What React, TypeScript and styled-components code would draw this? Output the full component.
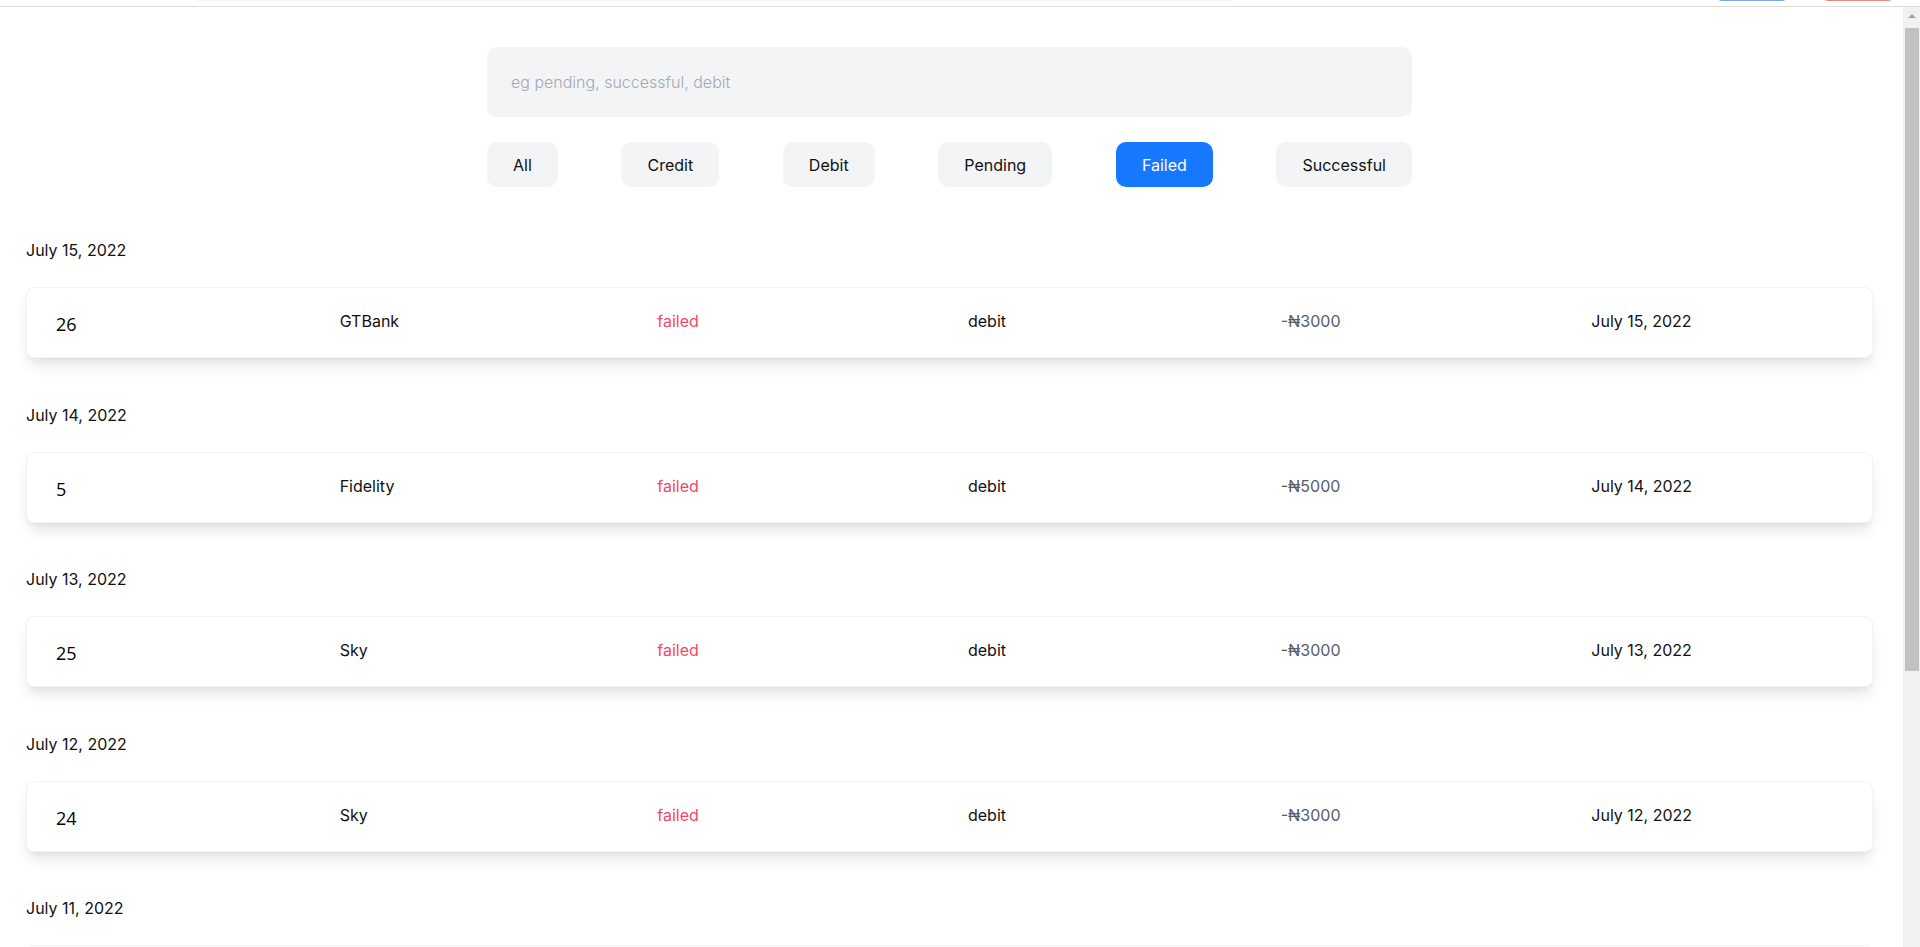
import React, { useState } from 'react';
import styled, { createGlobalStyle } from 'styled-components';

interface Transaction {
  id: number;
  bank: string;
  status: string;
  type: string;
  amount: number;
  date: string;
}

const FILTERS = ['All', 'Credit', 'Debit', 'Pending', 'Failed', 'Successful'];

const transactions: Transaction[] = [
  { id: 26, bank: 'GTBank', status: 'failed', type: 'debit', amount: 3000, date: 'July 15, 2022' },
  { id: 5, bank: 'Fidelity', status: 'failed', type: 'debit', amount: 5000, date: 'July 14, 2022' },
  { id: 25, bank: 'Sky', status: 'failed', type: 'debit', amount: 3000, date: 'July 13, 2022' },
  { id: 24, bank: 'Sky', status: 'failed', type: 'debit', amount: 3000, date: 'July 12, 2022' },
  { id: 23, bank: 'Access', status: 'failed', type: 'debit', amount: 2000, date: 'July 11, 2022' },
  { id: 22, bank: 'GTBank', status: 'failed', type: 'debit', amount: 3000, date: 'July 10, 2022' },
];

const App = () => {
  const [filter, setFilter] = useState<string>('Failed');
  const [query, setQuery] = useState<string>('');

  return (
    <>
      <GlobalStyle />
      <Shell>
        <TopBar>
          <TopSearch />
          <TopButton color="#7ea7e6" />
          <TopButton color="#e58a82" />
        </TopBar>
        <Body>
          <Main>
            <SearchArea>
              <SearchInput
                placeholder="eg pending, successful, debit"
                value={query}
                onChange={e => setQuery(e.target.value)}
              />
              <FilterRow>
                {FILTERS.map(item => (
                  <FilterButton key={item} active={item === filter} onClick={() => setFilter(item)}>
                    {item}
                  </FilterButton>
                ))}
              </FilterRow>
            </SearchArea>
            <List>
              {transactions.map(tx => (
                <Group key={tx.id}>
                  <GroupDate>{tx.date}</GroupDate>
                  <Card>
                    <IdCell>{tx.id}</IdCell>
                    <Cell>{tx.bank}</Cell>
                    <Cell color="#f5475f">{tx.status}</Cell>
                    <Cell>{tx.type}</Cell>
                    <Cell color="#575d69">-₦{tx.amount}</Cell>
                    <Cell>{tx.date}</Cell>
                  </Card>
                </Group>
              ))}
            </List>
          </Main>
          <ScrollRail>
            <ScrollArrow />
            <ScrollThumb />
          </ScrollRail>
        </Body>
      </Shell>
    </>
  );
};

export default App;

const GlobalStyle = createGlobalStyle`
  * {
    box-sizing: border-box;
  }
  html,
  body {
    margin: 0;
    padding: 0;
    overflow: hidden;
    background: #ffffff;
    font-family: Inter, 'Noto Sans', sans-serif;
    color: #111111;
  }
`;

const Shell = styled.div`
  height: 100vh;
  display: flex;
  flex-direction: column;
`;

const TopBar = styled.header`
  flex: 0 0 7px;
  height: 7px;
  display: flex;
  align-items: flex-end;
  padding: 0 26px 0 190px;
  border-bottom: 1px solid #dcdcdc;
  overflow: hidden;
`;

const TopSearch = styled.div`
  width: 1049px;
  height: 40px;
  margin-bottom: 5px;
  margin-right: auto;
  background: #f3f4f6;
  border-radius: 8px;
  flex-shrink: 0;
`;

const TopButton = styled.div<{ color: string }>`
  width: 72px;
  height: 40px;
  margin-bottom: 5px;
  margin-left: 34px;
  background: ${props => props.color};
  border-radius: 6px;
  flex-shrink: 0;
`;

const Body = styled.div`
  flex: 1;
  min-height: 0;
  display: flex;
`;

const Main = styled.main`
  flex: 1;
  overflow-y: auto;
  scrollbar-width: none;
`;

// drawn stand-in for the browser's classic scrollbar
const ScrollRail = styled.div`
  flex: 0 0 17px;
  display: flex;
  flex-direction: column;
  background: #f1f1f1;
`;

const ScrollArrow = styled.div`
  height: 17px;
  display: flex;
  align-items: center;
  justify-content: center;
  &::before {
    content: '';
    border-left: 4px solid transparent;
    border-right: 4px solid transparent;
    border-bottom: 4px solid #a3a3a3;
  }
`;

const ScrollThumb = styled.div`
  height: 643px;
  margin: 4px 1px 0 2px;
  background: #c1c1c1;
`;

const SearchArea = styled.section`
  width: 925px;
  margin: 40px auto 0;
  position: relative;
  left: -2px;
`;

const SearchInput = styled.input`
  width: 100%;
  height: 70px;
  padding: 0 24px;
  border: none;
  border-radius: 10px;
  background: #f3f4f6;
  font-family: inherit;
  font-size: 16px;
  color: #111111;
  outline: none;

  &::placeholder {
    color: #a3a9b3;
    font-weight: 300;
  }
`;

const FilterRow = styled.div`
  display: flex;
  justify-content: space-between;
  margin-top: 25px;
`;

const FilterButton = styled.button<{ active?: boolean }>`
  height: 45px;
  padding: 0 26px;
  border: none;
  border-radius: 10px;
  background: ${props => (props.active ? '#1677ff' : '#f3f4f6')};
  color: ${props => (props.active ? '#ffffff' : '#111111')};
  font-family: inherit;
  font-size: 16px;
  cursor: pointer;
`;

const List = styled.div`
  margin-top: 53px;
  padding: 0 30px 60px 26px;
`;

const Group = styled.div`
  margin-bottom: 46.5px;
`;

const GroupDate = styled.div`
  font-size: 16px;
  line-height: 20px;
  color: #111111;
`;

const Card = styled.div`
  margin-top: 27px;
  height: 71px;
  padding-bottom: 3px;
  display: grid;
  grid-template-columns: 313fr 318fr 311fr 313fr 311fr 281fr;
  align-items: center;
  background: #ffffff;
  border: 1px solid #f3f4f6;
  border-radius: 8px;
  box-shadow: 0 10px 15px -3px rgba(0, 0, 0, 0.1), 0 4px 6px -2px rgba(0, 0, 0, 0.05);
`;

const Cell = styled.div<{ color?: string }>`
  font-size: 16px;
  color: ${props => props.color ?? '#111111'};
  white-space: nowrap;
`;

const IdCell = styled.div`
  padding-left: 29px;
  padding-top: 6px;
  font-family: 'Open Sans', sans-serif;
  font-size: 18px;
  font-weight: 500;
  color: #000000;
`;
